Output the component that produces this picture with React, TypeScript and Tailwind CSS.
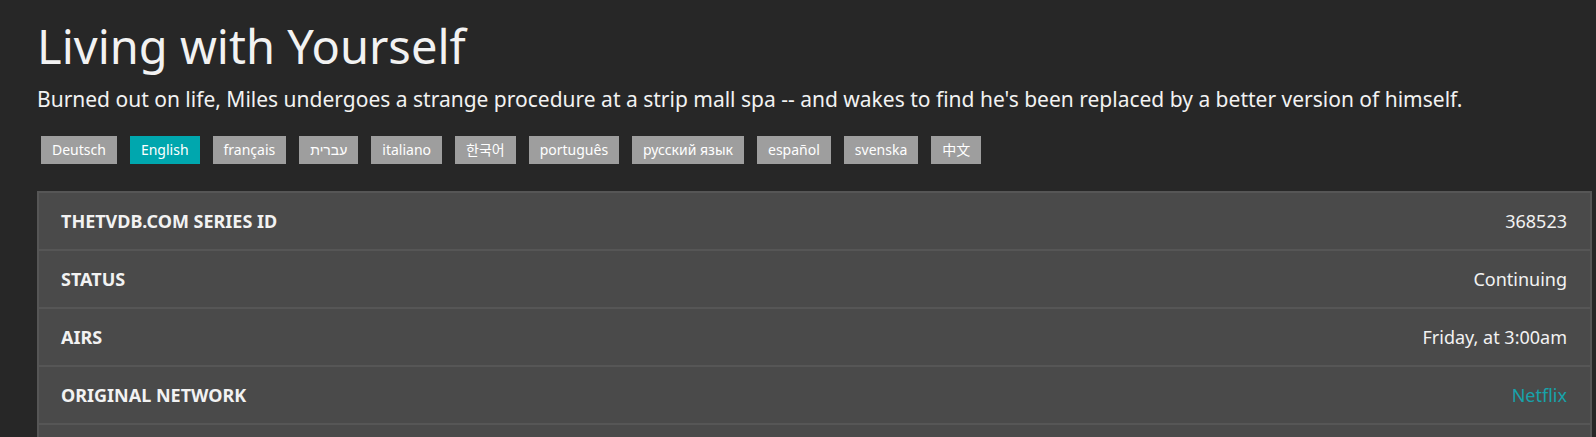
import React from 'react';

const languages = [
  'Deutsch',
  'English',
  'français',
  'עברית',
  'italiano',
  '한국어',
  'português',
  'русский язык',
  'español',
  'svenska',
  '中文',
];

const rows: { label: string; value: string; link?: boolean }[] = [
  { label: 'TheTVDB.com Series ID', value: '368523' },
  { label: 'Status', value: 'Continuing' },
  { label: 'Airs', value: 'Friday, at 3:00am' },
  { label: 'Original Network', value: 'Netflix', link: true },
  { label: 'Genres', value: 'Comedy' },
];

const App: React.FC = () => {
  return (
    <div
      className="h-[437px] overflow-hidden bg-[#272727] pl-[37px] pr-[4px] text-[#f2f2f2]"
      style={{ fontFamily: '"Noto Sans", "Noto Sans CJK KR", "Noto Sans CJK SC", sans-serif' }}
    >
      <h1 className="pt-[23px] text-[47px] leading-[47px] font-normal">Living with Yourself</h1>
      <p className="mt-[19px] text-[21px] leading-[21px]">
        Burned out on life, Miles undergoes a strange procedure at a strip mall spa -- and wakes to find he's been
        replaced by a better version of himself.
      </p>

      <div className="mt-[26px] flex gap-[13px] pl-[4px]">
        {languages.map((lang) => (
          <span
            key={lang}
            className={
              lang === 'English'
                ? 'h-[28px] px-[11px] text-[14px] leading-[28px] text-white bg-[#00a7ae]'
                : 'h-[28px] px-[11px] text-[14px] leading-[28px] text-white bg-[#9e9e9e]'
            }
          >
            {lang}
          </span>
        ))}
      </div>

      <div className="mt-[27px] border-2 border-[#565656] bg-[#4a4a4a]">
        {rows.map((row) => (
          <div
            key={row.label}
            className="flex h-[58px] items-center justify-between border-b-2 border-[#565656] pl-[22px] pr-[23px] text-[18px]"
          >
            <span className="font-bold uppercase">{row.label}</span>
            <span className={row.link ? 'text-[#17a2aa]' : ''}>{row.value}</span>
          </div>
        ))}
      </div>
    </div>
  );
};

export default App;
